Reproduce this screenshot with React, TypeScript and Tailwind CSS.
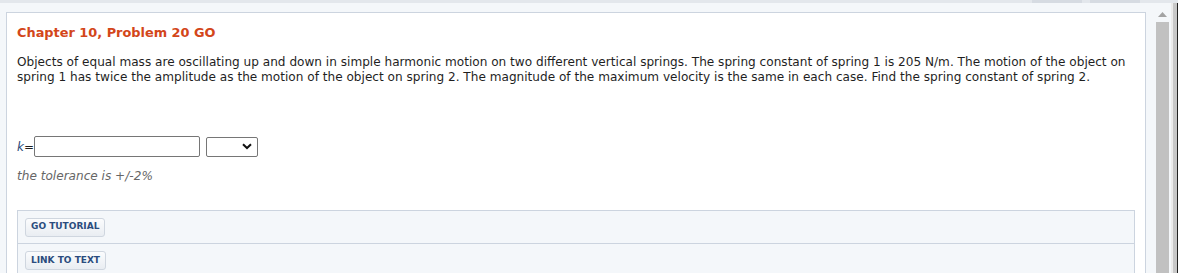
import React from 'react';

const font = { fontFamily: '"DejaVu Sans", Verdana, sans-serif' };

export default function App() {
    return (
        <div className="w-[1178px] h-[273px] overflow-hidden bg-[#f4f7fa] flex flex-col" style={font}>
            {/* top strip */}
            <div className="h-[3px] bg-[#e3e7ec] flex justify-end shrink-0">
                <div className="w-[50px] h-[3px] bg-[#d6dbe2] mr-[8px]" />
                <div className="w-[50px] h-[3px] bg-[#d6dbe2] mr-[38px]" />
            </div>

            <div className="flex flex-1 min-h-0">
                {/* content */}
                <div className="flex-1 pl-[6px] pr-[8px] pt-[9px] min-w-0">
                    <div className="bg-white border border-[#ccd4df] h-[300px] px-[10px] pt-[12px]">
                        <h1 className="text-[12.9px] font-bold text-[#d3461a] leading-[16px]">
                            Chapter 10, Problem 20 GO
                        </h1>

                        <p className="mt-[14px] text-[12.1px] leading-[15px] text-[#1f1f1f] pr-[6px]">
                            Objects of equal mass are oscillating up and down in simple harmonic motion on two different vertical springs. The spring constant of spring 1 is 205 N/m. The motion of the object on spring 1 has twice the amplitude as the motion of the object on spring 2. The magnitude of the maximum velocity is the same in each case. Find the spring constant of spring 2.
                        </p>

                        <div className="mt-[51px] flex items-center h-[21px]">
                            <span className="text-[12px] text-[#1f1f1f]">
                                <i className="text-[#2a4a7a]">k</i>=
                            </span>
                            <input
                                type="text"
                                className="w-[166px] h-[21px] border border-[#767676] rounded-[2px] bg-white outline-none"
                            />
                            <div className="ml-[6px] w-[52px] h-[20px] border border-[#767676] rounded-[2px] bg-white flex items-center justify-end pr-[5px]">
                                <svg width="10" height="7" viewBox="0 0 10 7">
                                    <path d="M1 1.2 L5 5 L9 1.2" fill="none" stroke="#111" strokeWidth="2" />
                                </svg>
                            </div>
                        </div>

                        <p className="mt-[12px] text-[12.1px] italic text-[#666] leading-[15px]">
                            the tolerance is +/-2%
                        </p>

                        <div className="mt-[26px] border border-[#ccd4df] bg-[#f4f7fa]">
                            <div className="h-[33px] flex items-center px-[7px] border-b border-[#ccd4df]">
                                <button className="h-[19px] px-[5px] border border-[#cfd6df] rounded-[3px] bg-gradient-to-b from-[#fbfcfd] to-[#e9edf2] text-[9px] font-bold text-[#2b4c7e]">
                                    GO TUTORIAL
                                </button>
                            </div>
                            <div className="h-[33px] flex items-center px-[7px]">
                                <button className="h-[19px] px-[5px] border border-[#cfd6df] rounded-[3px] bg-gradient-to-b from-[#fbfcfd] to-[#e9edf2] text-[9px] font-bold text-[#2b4c7e]">
                                    LINK TO TEXT
                                </button>
                            </div>
                        </div>
                    </div>
                </div>

                {/* scrollbar */}
                <div className="w-[24px] flex shrink-0">
                    <div className="w-[17px] flex flex-col items-center pt-[9px]">
                        <svg width="9" height="5" viewBox="0 0 9 5">
                            <path d="M0 5 L4.5 0 L9 5 Z" fill="#a3a3a3" />
                        </svg>
                        <div className="mt-[5px] w-[13px] flex-1 bg-[#c1c1c1]" />
                    </div>
                    <div className="w-[2px] bg-[#ececec]" />
                    <div className="w-[4px] bg-[#c8c8c8]" />
                    <div className="w-[1px] bg-[#222]" />
                </div>
            </div>
        </div>
    );
}
